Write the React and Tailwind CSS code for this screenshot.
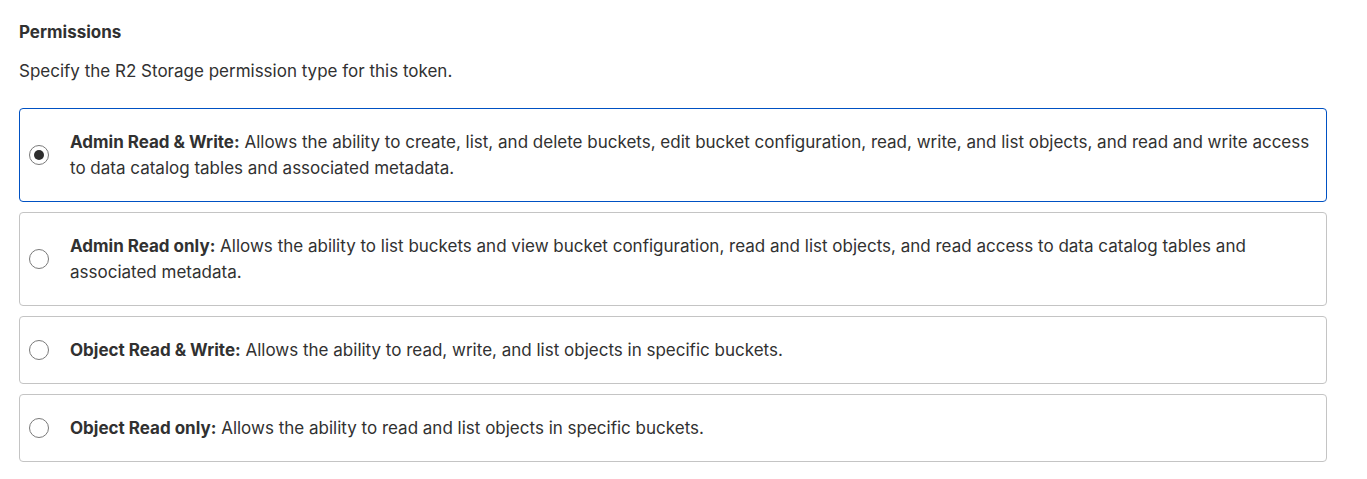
import React, { useState } from "react";

const options = [
  {
    title: "Admin Read & Write:",
    desc: "Allows the ability to create, list, and delete buckets, edit bucket configuration, read, write, and list objects, and read and write access to data catalog tables and associated metadata.",
  },
  {
    title: "Admin Read only:",
    desc: "Allows the ability to list buckets and view bucket configuration, read and list objects, and read access to data catalog tables and associated metadata.",
  },
  {
    title: "Object Read & Write:",
    desc: "Allows the ability to read, write, and list objects in specific buckets.",
  },
  {
    title: "Object Read only:",
    desc: "Allows the ability to read and list objects in specific buckets.",
  },
];

export default function App() {
  const [sel, setSel] = useState(0);
  return (
    <div
      className="w-[1367px] h-[479px] bg-white text-[#313131] px-[19px] pt-[21px]"
      style={{ fontFamily: "Inter, 'Noto Sans', sans-serif" }}
    >
      <h2 className="text-[17px] font-bold leading-[22px] text-[#313131]">Permissions</h2>
      <p className="mt-[17px] text-[17px] leading-[22px]">
        Specify the R2 Storage permission type for this token.
      </p>
      <div className="mt-[26px] w-[1308px] flex flex-col gap-[10px]">
        {options.map((o, i) => {
          const active = sel === i;
          return (
            <label
              key={i}
              onClick={() => setSel(i)}
              className={`flex items-center rounded-[4px] border pl-[9px] pr-[12px] py-[20px] cursor-pointer ${
                active ? "border-[#0051c3]" : "border-[#c4c4c4]"
              }`}
            >
              <span className="w-[20px] h-[20px] shrink-0 rounded-full border border-[#7a7a7a] flex items-center justify-center bg-white">
                {active && <span className="w-[10px] h-[10px] rounded-full bg-[#2e2e2e]" />}
              </span>
              <span className="ml-[21px] text-[17px] leading-[26px]">
                <span className="font-bold">{o.title}</span> {o.desc}
              </span>
            </label>
          );
        })}
      </div>
    </div>
  );
}
